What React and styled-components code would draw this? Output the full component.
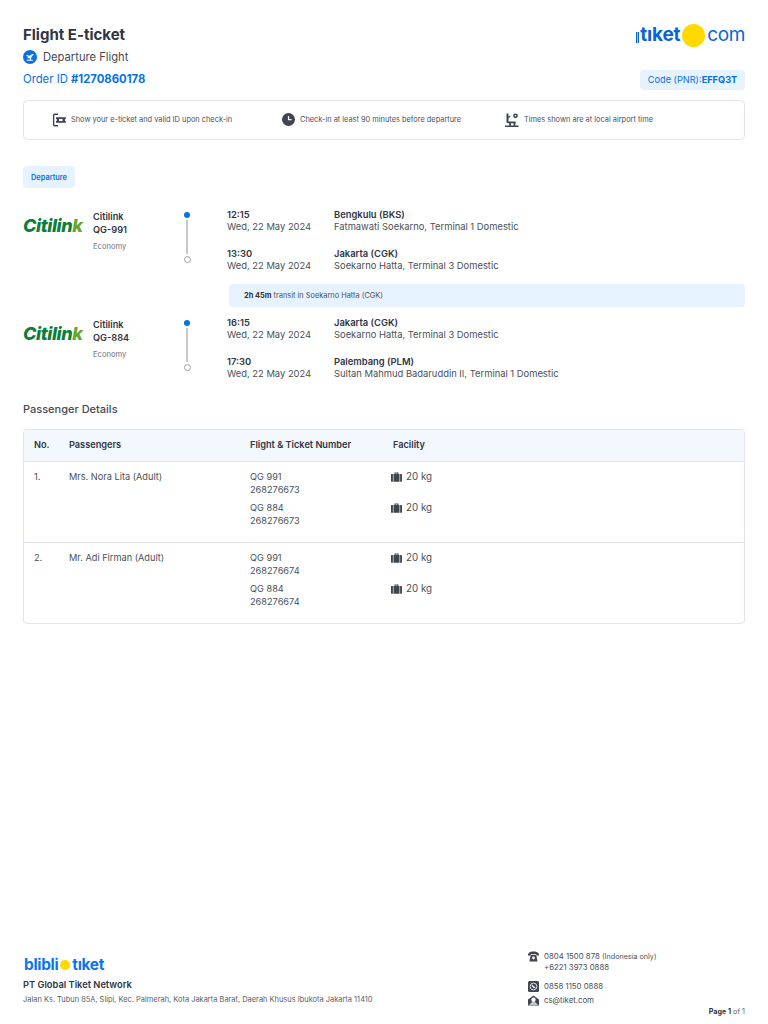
import React from 'react';
import styled, { createGlobalStyle } from 'styled-components';

const GlobalStyle = createGlobalStyle`
  html, body { margin: 0; padding: 0; background: #fff; }
  body { font-family: "Inter", "Noto Sans", sans-serif; color: #35405a; }
  * { box-sizing: border-box; }
`;

const Page = styled.div`
  width: 768px;
  height: 1024px;
  padding: 25px 23px 7px;
  display: flex;
  flex-direction: column;
  overflow: hidden;
`;

const Header = styled.header`
  display: flex;
  justify-content: space-between;
  height: 75px;
`;

const HeaderLeft = styled.div`
  display: flex;
  flex-direction: column;
`;

const Title = styled.h1`
  margin: 0;
  font-size: 15px;
  line-height: 20px;
  font-weight: 700;
  color: #2f3542;
`;

const SubTitle = styled.div`
  display: flex;
  align-items: center;
  gap: 6px;
  margin-top: 3px;
  font-size: 11.2px;
  line-height: 18px;
  color: #434a54;
`;

const OrderId = styled.div`
  margin-top: 4px;
  font-size: 11.3px;
  line-height: 18px;
  color: #0770e3;
  b { font-weight: 700; }
`;

const HeaderRight = styled.div`
  display: flex;
  flex-direction: column;
  align-items: flex-end;
  justify-content: space-between;
  margin-top: -2px;
  height: 67px;
`;

const Logo = styled.div`
  display: flex;
  align-items: center;
  font-size: 19px;
  line-height: 24px;
  color: #0a64d6;
  letter-spacing: -0.4px;
  b { font-weight: 700; font-size: 19px; letter-spacing: -0.2px; }
  i {
    display: block;
    width: 23px;
    height: 23px;
    margin: 0 2px 0 2px;
    border-radius: 50%;
    background: #ffd900;
  }
  &::before {
    content: "";
    display: block;
    width: 3px;
    height: 11px;
    margin: 4px 1px 0 0;
    background: repeating-linear-gradient(90deg, #0a64d6 0 1px, #9cc3f2 1px 2px);
  }
`;

const PnrBadge = styled.div`
  width: 105px;
  height: 20px;
  border-radius: 4px;
  background: #e7f2ff;
  color: #0770e3;
  font-size: 9.2px;
  line-height: 20px;
  text-align: center;
  white-space: nowrap;
  b { font-weight: 700; }
`;

const NoticeBox = styled.div`
  height: 40px;
  border: 1px solid #e2e5f0;
  border-radius: 4px;
  display: flex;
  align-items: center;
  padding: 0 0 1px 28px;
`;

const Notice = styled.div`
  width: ${p => p.$width}px;
  display: flex;
  align-items: center;
  gap: 5px;
  font-size: 7.4px;
  color: #4a5058;
  white-space: nowrap;
`;

const Tag = styled.div`
  align-self: flex-start;
  margin-top: 26px;
  width: 52px;
  height: 22px;
  border-radius: 4px;
  background: #e7f2ff;
  color: #0770e3;
  font-size: 7.4px;
  font-weight: 600;
  line-height: 23px;
  text-align: center;
`;

const Flight = styled.div`
  display: grid;
  grid-template-columns: 70px 82px 24px 1fr;
  margin-top: ${p => p.$top}px;
`;

const Airline = styled.div`
  padding-top: 6px;
  font-size: 18px;
  line-height: 22px;
  font-weight: 800;
  font-style: italic;
  color: #0a7f3a;
  letter-spacing: -0.4px;
  white-space: nowrap;
  span { color: #6aa52a; }
`;

const Carrier = styled.div`
  font-size: 9.2px;
  line-height: 13px;
  color: #2f3542;
  font-weight: 600;
  padding-top: 1px;
  small {
    display: block;
    margin-top: 4px;
    font-size: 7.6px;
    font-weight: 400;
    color: #6b7280;
  }
`;

const Track = styled.div`
  display: flex;
  flex-direction: column;
  align-items: center;
  padding-top: 3px;
`;

const DotStart = styled.span`
  width: 6px;
  height: 6px;
  border-radius: 50%;
  background: #0770e3;
`;

const Line = styled.span`
  width: 1.5px;
  height: 34px;
  margin: 2px 0;
  background: #c4c7cc;
`;

const DotEnd = styled.span`
  width: 7px;
  height: 7px;
  border-radius: 50%;
  border: 1px solid #9a9fa6;
`;

const Stops = styled.div`
  margin-left: 28px;
  display: flex;
  flex-direction: column;
  gap: 15px;
`;

const Stop = styled.div`
  display: grid;
  grid-template-columns: 107px 1fr;
  font-size: 9.4px;
  line-height: 12px;
  color: #4a5058;
  white-space: nowrap;
  b { font-weight: 600; color: #2f3542; }
`;

const Transit = styled.div`
  margin: 12px 0 10px 206px;
  height: 23px;
  border-radius: 4px;
  background: #e7f2ff;
  padding-left: 15px;
  font-size: 7.4px;
  line-height: 23px;
  color: #4a5058;
  b { font-weight: 700; color: #2f3542; }
`;

const SectionTitle = styled.h2`
  margin: 20px 0 0;
  font-size: 11px;
  line-height: 18px;
  font-weight: 500;
  color: #434a54;
`;

const Table = styled.div`
  margin-top: 11px;
  height: 195px;
  border: 1px solid #e2e5f0;
  border-radius: 4px;
  overflow: hidden;
`;

const Cols = styled.div`
  display: grid;
  grid-template-columns: 35px 181px 143px 1fr;
  padding-left: 10px;
`;

const TableHead = styled(Cols)`
  height: 32px;
  padding-bottom: 2px;
  background: #f3f7fe;
  border-bottom: 1px solid #e2e5f0;
  align-items: center;
  font-size: 9.2px;
  font-weight: 600;
  color: #2f3542;
  white-space: nowrap;
`;

const TableRow = styled(Cols)`
  height: 81px;
  padding-top: 8px;
  font-size: 9.2px;
  line-height: 13px;
  color: #4a5058;
  border-bottom: ${p => (p.$last ? 'none' : '1px solid #e2e5f0')};
  white-space: nowrap;
`;

const Stack = styled.div`
  display: flex;
  flex-direction: column;
  gap: 5px;
`;

const Ticket = styled.div`
  height: 26px;
`;

const Baggage = styled.div`
  height: 26px;
  margin-left: -2px;
  display: flex;
  align-items: flex-start;
  gap: 4px;
  font-size: 9.8px;
  svg { margin-top: 2px; }
`;

const Footer = styled.footer`
  margin-top: auto;
  display: flex;
  justify-content: space-between;
  position: relative;
  height: 66px;
`;

const FooterLeft = styled.div`
  display: flex;
  flex-direction: column;
  padding-top: 5px;
`;

const FooterLogo = styled.div`
  display: flex;
  align-items: center;
  margin-left: 1px;
  font-size: 15.4px;
  line-height: 18px;
  font-weight: 700;
  color: #0a75ec;
  letter-spacing: -0.3px;
  i {
    display: block;
    width: 10px;
    height: 10px;
    margin: 0 2px;
    border-radius: 50%;
    background: #ffd900;
  }
`;

const Company = styled.div`
  margin-top: 5px;
  font-size: 9.3px;
  line-height: 12px;
  font-weight: 600;
  color: #2f3542;
`;

const Address = styled.div`
  margin-top: 3px;
  font-size: 7.45px;
  line-height: 12px;
  color: #5a6068;
  white-space: nowrap;
`;

const FooterRight = styled.div`
  width: 217px;
  display: flex;
  flex-direction: column;
  gap: 3px;
`;

const Contact = styled.div`
  display: flex;
  gap: 5px;
  margin-top: ${p => p.$top || 0}px;
  font-size: 7.8px;
  line-height: 11px;
  color: #4a5058;
  svg { flex: none; }
  small { font-size: 7.2px; }
`;

const PageNo = styled.div`
  position: absolute;
  right: 0;
  bottom: 1px;
  font-size: 7.2px;
  color: #5a6068;
  b { font-weight: 700; color: #2f3542; }
`;

const PlaneIcon = () => (
  <svg width="14" height="14" viewBox="0 0 14 14">
    <circle cx="7" cy="7" r="7" fill="#0770e3" />
    <path d="M3 5.4l1-.5 2.6.8 2.3-1.5c.6-.3 1.4-.2 1.6.1.1.4-.2.9-.8 1.3L8.4 7l-.5 2.8-1 .5-.4-2.5-1.5.8-.9-.5 1.3-1.2z" fill="#fff" />
    <rect x="3.6" y="9.8" width="6.4" height="1" rx=".5" fill="#fff" />
  </svg>
);

const TicketIcon = () => (
  <svg width="14" height="14" viewBox="0 0 14 14" fill="none">
    <path d="M6 1.2H2.6c-.6 0-1 .4-1 1v9.6c0 .6.4 1 1 1H6" stroke="#3f4650" strokeWidth="1.4" />
    <path d="M4 4.2h9.800v1.800a1 1 0 000 2v1.800H4V8a1 1 0 000-2z" fill="#3f4650" />
    <rect x="7" y="6" width="3.500" height="2" fill="#fff" />
  </svg>
);

const ClockIcon = () => (
  <svg width="13" height="13" viewBox="0 0 13 13">
    <circle cx="6.500" cy="6.500" r="6.500" fill="#3f4650" />
    <path d="M6.500 3v3.700h3" stroke="#fff" strokeWidth="1.200" fill="none" />
  </svg>
);

const SeatIcon = () => (
  <svg width="14" height="14" viewBox="0 0 14 14">
    <circle cx="10.500" cy="2.800" r="2.400" fill="#3f4650" />
    <circle cx="10.500" cy="2.800" r=".8" fill="#fff" />
    <path d="M1.500.5h2v3l1.800-1v1.500l-1.800 1V8.500H9.500c.8 0 1.400.5 1.500 1.700H3C2 10.200 1.500 9.700 1.500 9z" fill="#3f4650" />
    <path d="M0 12.400h13.500V14H0zM4.200 10h1.800v2.700H4.200zM8.500 10h1.800v2.700H8.500z" fill="#3f4650" />
  </svg>
);

const BagIcon = () => (
  <svg width="11" height="10" viewBox="0 0 11 10">
    <path d="M3.500 2V.6h4V2h3c.3 0 .5.2.5.5v6.800c0 .3-.2.5-.5.5h-10a.5.5 0 01-.5-.5V2.500c0-.3.2-.5.5-.5zm1-.6V2h2v-.6z" fill="#3f4650" fillRule="evenodd" />
    <path d="M2.300 2v8M8.700 2v8" stroke="#fff" strokeWidth=".6" />
  </svg>
);

const PhoneIcon = () => (
  <svg width="11" height="11" viewBox="0 0 11 11">
    <path d="M0 3.200C1 1 3.500.5 5.500.5s4.500.5 5.500 2.700V4.500H8.200V3H2.800v1.500H0z" fill="#3f4650" />
    <path d="M2.500 5L3.500 3.800h4L8.500 5l1 5.500h-8z" fill="#3f4650" />
    <circle cx="5.500" cy="7" r="1.400" fill="#fff" />
  </svg>
);

const ChatIcon = () => (
  <svg width="11" height="11" viewBox="0 0 11 11">
    <rect width="11" height="11" rx="1.500" fill="#3f4650" />
    <circle cx="5.500" cy="5.500" r="3.400" fill="none" stroke="#fff" strokeWidth=".8" />
    <path d="M4 3.800l1 .2.300 1 .8.800 1-.1.300 1-1 .5C5 6.800 3.800 5.600 3.600 4.300z" fill="#fff" />
  </svg>
);

const MailIcon = () => (
  <svg width="11" height="11" viewBox="0 0 11 11">
    <path d="M5.500.5L11 4.500V10.500H0V4.500z" fill="#3f4650" />
    <circle cx="5.500" cy="4.800" r="2.200" fill="#fff" />
    <path d="M1 10l3-3h3l3 3z" fill="#fff" opacity=".7" />
  </svg>
);

const flights = [
  {
    code: 'QG-991',
    top: 21,
    stops: [
      ['12:15', 'Wed, 22 May 2024', 'Bengkulu (BKS)', 'Fatmawati Soekarno, Terminal 1 Domestic'],
      ['13:30', 'Wed, 22 May 2024', 'Jakarta (CGK)', 'Soekarno Hatta, Terminal 3 Domestic'],
    ],
  },
  {
    code: 'QG-884',
    top: 0,
    stops: [
      ['16:15', 'Wed, 22 May 2024', 'Jakarta (CGK)', 'Soekarno Hatta, Terminal 3 Domestic'],
      ['17:30', 'Wed, 22 May 2024', 'Palembang (PLM)', 'Sultan Mahmud Badaruddin II, Terminal 1 Domestic'],
    ],
  },
];

const passengers = [
  { name: 'Mrs. Nora Lita (Adult)', ticket: '268276673' },
  { name: 'Mr. Adi Firman (Adult)', ticket: '268276674' },
];

function FlightRow({ flight }) {
  return (
    <Flight $top={flight.top}>
      <Airline>
        Citilin<span>k</span>
      </Airline>
      <Carrier>
        Citilink
        <br />
        {flight.code}
        <small>Economy</small>
      </Carrier>
      <Track>
        <DotStart />
        <Line />
        <DotEnd />
      </Track>
      <Stops>
        {flight.stops.map(s => (
          <Stop key={s[0]}>
            <b>{s[0]}</b>
            <b>{s[2]}</b>
            <span>{s[1]}</span>
            <span>{s[3]}</span>
          </Stop>
        ))}
      </Stops>
    </Flight>
  );
}

export default function App() {
  return (
    <Page>
      <GlobalStyle />
      <Header>
        <HeaderLeft>
          <Title>Flight E-ticket</Title>
          <SubTitle>
            <PlaneIcon />
            Departure Flight
          </SubTitle>
          <OrderId>
            Order ID <b>#1270860178</b>
          </OrderId>
        </HeaderLeft>
        <HeaderRight>
          <Logo>
            <b>tıket</b>
            <i />
            com
          </Logo>
          <PnrBadge>
            Code (PNR):<b>EFFQ3T</b>
          </PnrBadge>
        </HeaderRight>
      </Header>

      <NoticeBox>
        <Notice $width={230}>
          <TicketIcon />
          Show your e-ticket and valid ID upon check-in
        </Notice>
        <Notice $width={223}>
          <ClockIcon />
          Check-in at least 90 minutes before departure
        </Notice>
        <Notice $width={220}>
          <SeatIcon />
          Times shown are at local airport time
        </Notice>
      </NoticeBox>

      <Tag>Departure</Tag>

      <FlightRow flight={flights[0]} />
      <Transit>
        <b>2h 45m</b> transit in Soekarno Hatta (CGK)
      </Transit>
      <FlightRow flight={flights[1]} />

      <SectionTitle>Passenger Details</SectionTitle>
      <Table>
        <TableHead>
          <span>No.</span>
          <span>Passengers</span>
          <span>Flight &amp; Ticket Number</span>
          <span>Facility</span>
        </TableHead>
        {passengers.map((p, i) => (
          <TableRow key={p.ticket} $last={i === passengers.length - 1}>
            <span>{i + 1}.</span>
            <span>{p.name}</span>
            <Stack>
              {['QG 991', 'QG 884'].map(f => (
                <Ticket key={f}>
                  {f}
                  <br />
                  {p.ticket}
                </Ticket>
              ))}
            </Stack>
            <Stack>
              {['QG 991', 'QG 884'].map(f => (
                <Baggage key={f}>
                  <BagIcon />
                  20 kg
                </Baggage>
              ))}
            </Stack>
          </TableRow>
        ))}
      </Table>

      <Footer>
        <FooterLeft>
          <FooterLogo>
            blibli
            <i />
            tıket
          </FooterLogo>
          <Company>PT Global Tiket Network</Company>
          <Address>Jalan Ks. Tubun 85A, Slipi, Kec. Palmerah, Kota Jakarta Barat, Daerah Khusus Ibukota Jakarta 11410</Address>
        </FooterLeft>
        <FooterRight>
          <Contact>
            <PhoneIcon />
            <span>
              0804 1500 878 <small>(Indonesia only)</small>
              <br />
              +6221 3973 0888
            </span>
          </Contact>
          <Contact $top={5}>
            <ChatIcon />
            0858 1150 0888
          </Contact>
          <Contact>
            <MailIcon />
            cs@tiket.com
          </Contact>
        </FooterRight>
        <PageNo>
          <b>Page 1</b> of 1
        </PageNo>
      </Footer>
    </Page>
  );
}
